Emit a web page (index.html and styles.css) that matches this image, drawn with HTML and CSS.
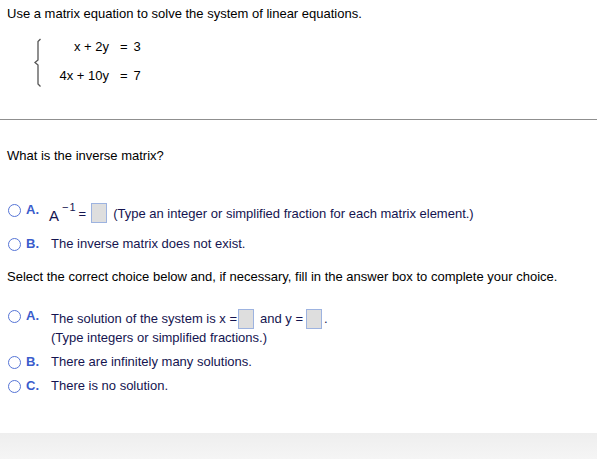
FILE: index.html
```html
<!DOCTYPE html>
<html>
<head>
<meta charset="utf-8">
<link rel="stylesheet" href="styles.css">
</head>
<body>
<div class="page">
  <main class="main">
    <section class="problem">
      <p class="prompt">Use a matrix equation to solve the system of linear equations.</p>
      <div class="system">
        <svg class="brace" width="12" height="50" viewBox="0 0 12 50">
          <path d="M10.5 1 L8 3.5 L8 22 L5 24.5 L8 27 L8 46 L10.5 48.5" fill="none" stroke="#555" stroke-width="1.3"/>
        </svg>
        <table class="eqs">
          <tr><td class="lhs">x + 2y</td><td class="eq">=</td><td class="rhs">3</td></tr>
          <tr><td class="lhs">4x + 10y</td><td class="eq">=</td><td class="rhs">7</td></tr>
        </table>
      </div>
    </section>
    <hr class="divider">
    <section class="part">
      <p class="prompt q1">What is the inverse matrix?</p>
      <ul class="choices first">
        <li class="choice with-input">
          <span class="radio"></span><span class="letter">A.</span>
          <span class="body"><span class="mathA">A<sup>−1</sup></span><span class="eqsign">=</span><span class="box"></span><span class="hint">(Type an integer or simplified fraction for each matrix element.)</span></span>
        </li>
        <li class="choice">
          <span class="radio"></span><span class="letter">B.</span>
          <span class="body">The inverse matrix does not exist.</span>
        </li>
      </ul>
      <p class="prompt select">Select the correct choice below and, if necessary, fill in the answer box to complete your choice.</p>
      <ul class="choices second">
        <li class="choice with-input">
          <span class="radio"></span><span class="letter">A.</span>
          <span class="body">
            <span class="line">The solution of the system is x =<span class="box bx"></span>and y =<span class="box by"></span>.</span>
            <span class="line sub">(Type integers or simplified fractions.)</span>
          </span>
        </li>
        <li class="choice">
          <span class="radio"></span><span class="letter">B.</span>
          <span class="body">There are infinitely many solutions.</span>
        </li>
        <li class="choice">
          <span class="radio"></span><span class="letter">C.</span>
          <span class="body">There is no solution.</span>
        </li>
      </ul>
    </section>
  </main>
  <footer class="footer"></footer>
</div>
</body>
</html>
```

FILE: styles.css
```css
* { box-sizing: border-box; }
html, body { margin: 0; padding: 0; background: #fff; }
body {
  font-family: "Liberation Sans", Arial, sans-serif;
  font-size: 13px;
  color: #000;
}
.page {
  height: 459px;
  display: flex;
  flex-direction: column;
}
.main { flex: 1; }
.prompt { margin: 0; line-height: 16px; }
.problem { padding: 6px 7px 0; }
.system {
  display: flex;
  align-items: flex-start;
  margin-top: 16px;
  margin-left: 23px;
}
.eqs {
  border-collapse: collapse;
  margin-top: -6px;
}
.eqs td { padding: 0; height: 29px; line-height: 16px; font-size: 13px; }
.eqs .lhs { text-align: right; width: 67px; }
.eqs .eq { padding: 0 6px 0 11px; }
.divider {
  border: 0;
  border-top: 1px solid #8f8f8f;
  margin: 0;
  margin-top: 29px;
}
.part { padding: 0 7px; }
.q1 { margin-top: 28px; }
.choices { list-style: none; margin: 0; padding: 0; color: #141450; }
.choice {
  display: flex;
  align-items: flex-start;
  line-height: 16px;
}
.radio {
  flex: none;
  width: 13px;
  height: 13px;
  border: 1.3px solid #5675d6;
  border-radius: 50%;
  margin-top: 1.5px;
  margin-left: 1px;
}
.letter {
  flex: none;
  width: 25px;
  margin-left: 5px;
  color: #3a5ccc;
  font-weight: bold;
}
.body { display: block; }
.with-input .body { margin-top: 3px; }
.first { margin-top: 38px; }
.first .choice + .choice { margin-top: 14px; }
.mathA {
  position: relative;
  top: 3px;
  margin-left: -2px;
  font-size: 15px;
}
.mathA sup {
  font-size: 11px;
  vertical-align: baseline;
  position: relative;
  top: -10px;
  margin-left: 3px;
  letter-spacing: 1px;
}
.eqsign { margin: 0 5px 0 2px; }
.box {
  display: inline-block;
  width: 16px;
  height: 20px;
  background: #dedede;
  border: 1px solid #9db3e0;
  vertical-align: top;
  margin-top: -2px;
  margin-bottom: -2px;
}
.first .box { margin-right: 6px; }
.select { margin-top: 17px; }
.second { margin-top: 23px; }
.second .choice:nth-child(2) { margin-top: 8px; }
.second .choice:nth-child(3) { margin-top: 8px; }
.line { display: block; }
.bx { margin-left: 1px; margin-right: 6px; }
.by { margin-left: 3px; margin-right: 2px; }
.sub { margin-top: 3px; }
.footer {
  height: 26px;
  background: linear-gradient(#eeeeee, #f5f5f5);
}
```
